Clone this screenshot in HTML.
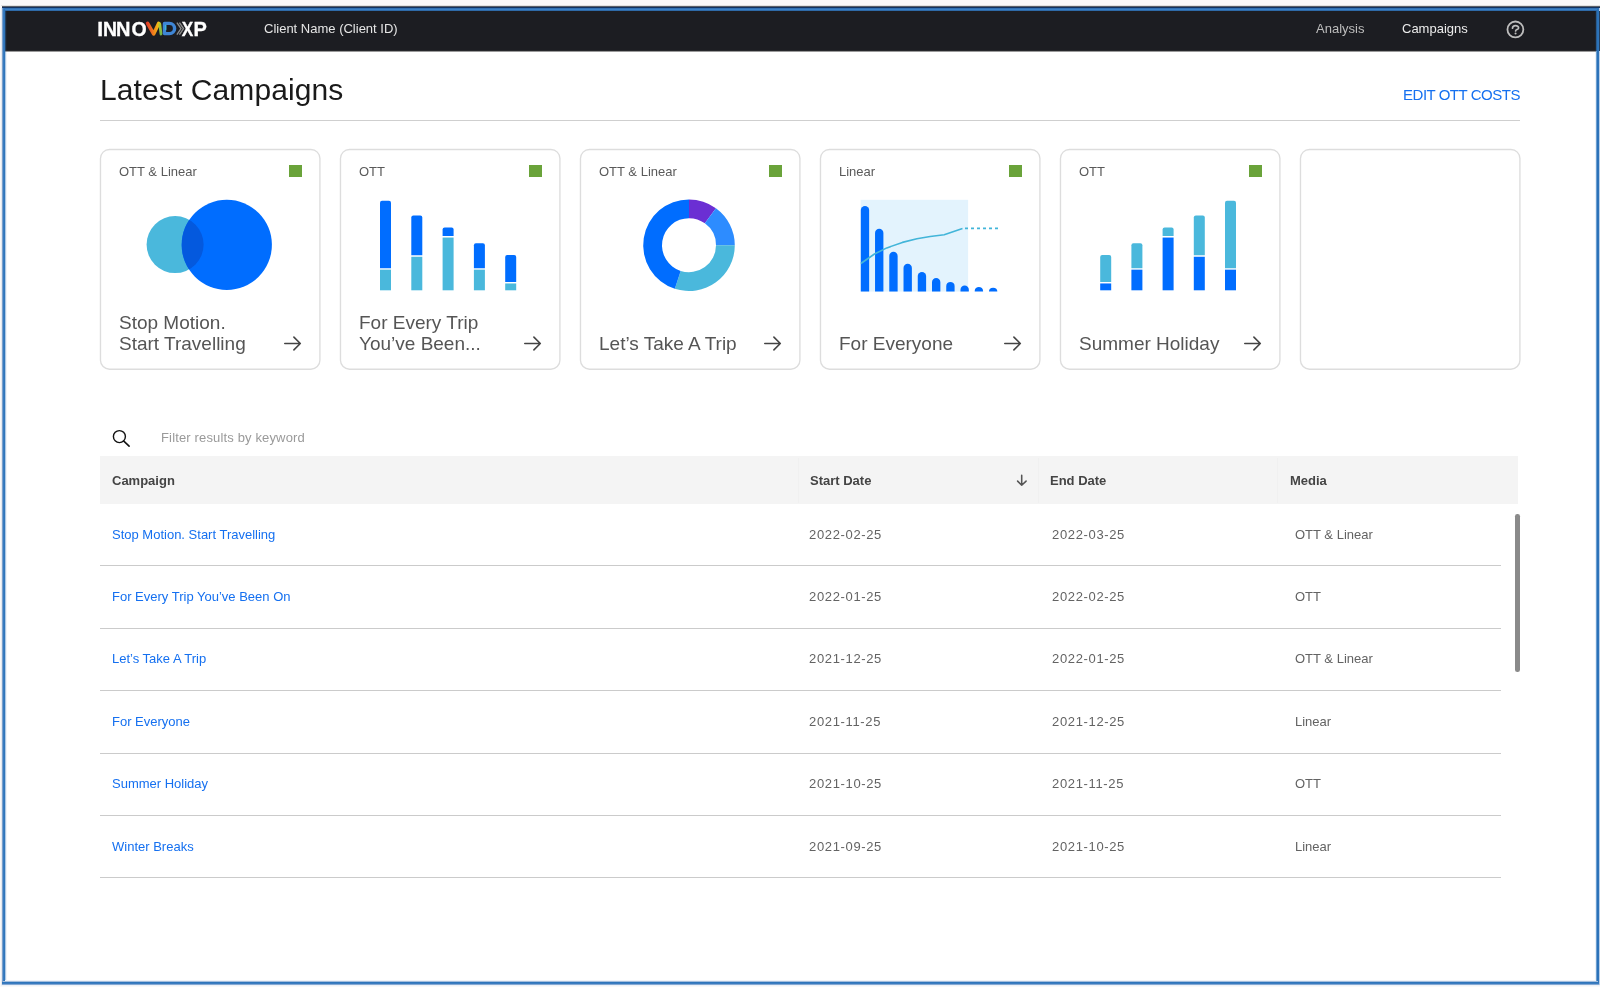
<!DOCTYPE html>
<html><head><meta charset="utf-8">
<style>
*{box-sizing:border-box;margin:0;padding:0}
html,body{width:1600px;height:987px;overflow:hidden;background:#f9f9f9;font-family:"Liberation Sans",sans-serif;position:relative}
.a{position:absolute;white-space:nowrap;line-height:1;will-change:transform}
.b{position:absolute}
.card{position:absolute;top:149px;width:221px;height:221px;border:1.5px solid #e0e0e0;border-radius:8px;background:#fff}
.tag{font-size:13px;color:#5a5a5a}
.sq{position:absolute;top:164.5px;width:12.5px;height:12.5px;background:#6aa33a}
.ct{position:absolute;font-size:19px;color:#555;line-height:21px;white-space:nowrap;will-change:transform}
.th{font-size:13px;font-weight:700;color:#444}
.td{font-size:13px;color:#636363}
.dt{letter-spacing:0.65px}
.lk{font-size:13px;color:#1570f0}
.sep{position:absolute;left:100px;width:1401px;height:1px;background:#cbcbcb}
</style></head>
<body>
<div class="b" style="left:5px;top:11px;width:1595px;height:970px;background:#fff"></div>
<div class="b" style="left:5px;top:11px;width:1595px;height:40px;background:#1c1d22"></div>
<div class="b" style="left:5px;top:50px;width:1591px;height:1px;background:#26272b"></div>
<div class="b" style="left:5px;top:51px;width:1591px;height:1px;background:#9a9a9a"></div>
<div class="b" style="left:1px;top:5px;width:1599px;height:1px;background:#e2e2e2"></div>
<div class="b" style="left:2px;top:6px;width:1598px;height:1px;background:#5a6068"></div>
<div class="b" style="left:2px;top:7px;width:1598px;height:1px;background:#12325f"></div>
<div class="b" style="left:2px;top:8px;width:1598px;height:1px;background:#3070b2"></div>
<div class="b" style="left:2px;top:9px;width:1598px;height:1px;background:#3a80c5"></div>
<div class="b" style="left:2px;top:10px;width:1598px;height:1px;background:#2e6aa8"></div>
<div class="b" style="left:1px;top:8px;width:1px;height:978px;background:#e6e9ef"></div>
<div class="b" style="left:2px;top:8px;width:1px;height:978px;background:#7aa0cc"></div>
<div class="b" style="left:3px;top:8px;width:1px;height:977px;background:#3a7cc0"></div>
<div class="b" style="left:4px;top:8px;width:1px;height:977px;background:#2f75bb"></div>
<div class="b" style="left:5px;top:11px;width:1px;height:974px;background:rgba(48,118,189,0.4)"></div>
<div class="b" style="left:6px;top:11px;width:1px;height:974px;background:rgba(48,118,189,0.08)"></div>
<div class="b" style="left:1595px;top:11px;width:1px;height:974px;background:rgba(48,118,189,0.1)"></div>
<div class="b" style="left:1596px;top:11px;width:1px;height:974px;background:rgba(48,118,189,0.71)"></div>
<div class="b" style="left:1597px;top:8px;width:1px;height:977px;background:#2a72b9"></div>
<div class="b" style="left:1598px;top:8px;width:1px;height:977px;background:#2e74ba"></div>
<div class="b" style="left:1599px;top:8px;width:1px;height:978px;background:#b7cde6"></div>
<div class="b" style="left:1599px;top:11px;width:1px;height:40px;background:#24405f"></div>
<div class="b" style="left:5px;top:980px;width:1591px;height:1px;background:#f0f3f8"></div>
<div class="b" style="left:3px;top:981px;width:1595px;height:1px;background:#a4bedd"></div>
<div class="b" style="left:2px;top:982px;width:1597px;height:1px;background:#2f75bb"></div>
<div class="b" style="left:2px;top:983px;width:1597px;height:1px;background:#3a7cc0"></div>
<div class="b" style="left:2px;top:984px;width:1597px;height:1px;background:#85a9d3"></div>
<div class="b" style="left:1px;top:985px;width:1599px;height:1px;background:#eef2f8"></div>

<svg class="b" style="left:0;top:0;will-change:transform" width="260" height="50"><defs><linearGradient id="gv" x1="146" y1="0" x2="160" y2="0" gradientUnits="userSpaceOnUse"><stop offset="0" stop-color="#e0352a"/><stop offset="0.5" stop-color="#f07a1e"/><stop offset="1" stop-color="#f6d210"/></linearGradient><linearGradient id="gi" x1="0" y1="23" x2="0" y2="35" gradientUnits="userSpaceOnUse"><stop offset="0" stop-color="#b5c932"/><stop offset="1" stop-color="#72b54a"/></linearGradient></defs>
<g font-family="Liberation Sans" font-weight="700" font-size="20" fill="#fff" stroke="#fff" stroke-width="0.35">
<text transform="translate(97.2 35.5) scale(1.05 1)">I</text>
<text transform="translate(102.9 35.5) scale(0.97 1)">N</text>
<text transform="translate(115.9 35.5) scale(1.0 1)">N</text>
<text transform="translate(131.4 35.5) scale(0.975 1)">O</text>
<text transform="translate(181.8 35.5) scale(0.86 1)">X</text>
<text x="193.4" y="35.5">P</text>
</g>
<path d="M147.6 23.4L153.6 33.9L158.6 23.4" fill="none" stroke="url(#gv)" stroke-width="3.6" stroke-linecap="round" stroke-linejoin="round"/>
<path d="M159.8 24L161 34" fill="none" stroke="url(#gi)" stroke-width="2.8" stroke-linecap="round"/>
<path d="M164.45 23.4H169.5A5.1 5.1 0 0 1 169.5 33.6H164.45Z" fill="none" stroke="#3f86d6" stroke-width="3.4" stroke-linejoin="round"/>
<path d="M165.6 25.5V29.5" stroke="#3cb8dc" stroke-width="1.6" stroke-linecap="round"/>
<path d="M176.9 22.6L181 28.6L176.9 34.6M179.4 22.6L183.5 28.6L179.4 34.6" fill="none" stroke="#8c8c8c" stroke-width="1.4"/>
</svg>
<div class="a" style="left:264px;top:22px;font-size:13px;color:#e6e6e6">Client Name (Client ID)</div>
<div class="a" style="left:1316px;top:22px;font-size:13px;color:#bdbdbd">Analysis</div>
<div class="a" style="left:1402px;top:22px;font-size:13px;color:#ececec">Campaigns</div>
<svg class="b" style="left:1500px;top:15px" width="32" height="30"><circle cx="15.4" cy="14.45" r="7.95" fill="none" stroke="#bdbdbd" stroke-width="1.8"/><path d="M12.5 13.2C12.5 9.9 18.6 9.9 18.6 12.9C18.6 14.6 15.6 14.5 15.6 15.9" fill="none" stroke="#bdbdbd" stroke-width="1.7" stroke-linecap="round"/><circle cx="15.55" cy="18.5" r="1.05" fill="#bdbdbd"/></svg>
<div class="a" style="left:99.8px;top:75px;font-size:30px;letter-spacing:0.1px;color:#1a1a1a">Latest Campaigns</div>
<div class="b" style="left:100px;top:119.5px;width:1420px;height:1px;background:#cfcfcf"></div>
<div class="a" style="left:1403px;top:86.5px;font-size:15px;letter-spacing:-0.48px;color:#1570f0">EDIT OTT COSTS</div>
<svg class="b" style="left:95px;top:144px" width="232" height="232"><rect x="5.47" y="5.47" width="219.45" height="219.75" rx="9" fill="#fff" stroke="#dddddd" stroke-width="1.35"/></svg>
<div class="a tag" style="left:119px;top:165px">OTT &amp; Linear</div>
<div class="sq" style="left:289px"></div>
<div class="ct" style="left:119px;top:312px">Stop Motion.</div>
<div class="ct" style="left:119px;top:333px">Start Travelling</div>
<svg class="b" style="left:280px;top:333px" width="24" height="22"><path d="M4.8 10.5H20.3M13.9 4.1L20.3 10.5L13.9 16.9" fill="none" stroke="#444" stroke-width="1.6" stroke-linecap="round" stroke-linejoin="round"/></svg>
<svg class="b" style="left:335px;top:144px" width="232" height="232"><rect x="5.47" y="5.47" width="219.45" height="219.75" rx="9" fill="#fff" stroke="#dddddd" stroke-width="1.35"/></svg>
<div class="a tag" style="left:359px;top:165px">OTT</div>
<div class="sq" style="left:529px"></div>
<div class="ct" style="left:359px;top:312px">For Every Trip</div>
<div class="ct" style="left:359px;top:333px">You&#8217;ve Been...</div>
<svg class="b" style="left:520px;top:333px" width="24" height="22"><path d="M4.8 10.5H20.3M13.9 4.1L20.3 10.5L13.9 16.9" fill="none" stroke="#444" stroke-width="1.6" stroke-linecap="round" stroke-linejoin="round"/></svg>
<svg class="b" style="left:575px;top:144px" width="232" height="232"><rect x="5.47" y="5.47" width="219.45" height="219.75" rx="9" fill="#fff" stroke="#dddddd" stroke-width="1.35"/></svg>
<div class="a tag" style="left:599px;top:165px">OTT &amp; Linear</div>
<div class="sq" style="left:769px"></div>
<div class="ct" style="left:599px;top:333px">Let&#8217;s Take A Trip</div>
<svg class="b" style="left:760px;top:333px" width="24" height="22"><path d="M4.8 10.5H20.3M13.9 4.1L20.3 10.5L13.9 16.9" fill="none" stroke="#444" stroke-width="1.6" stroke-linecap="round" stroke-linejoin="round"/></svg>
<svg class="b" style="left:815px;top:144px" width="232" height="232"><rect x="5.47" y="5.47" width="219.45" height="219.75" rx="9" fill="#fff" stroke="#dddddd" stroke-width="1.35"/></svg>
<div class="a tag" style="left:839px;top:165px">Linear</div>
<div class="sq" style="left:1009px"></div>
<div class="ct" style="left:839px;top:333px">For Everyone</div>
<svg class="b" style="left:1000px;top:333px" width="24" height="22"><path d="M4.8 10.5H20.3M13.9 4.1L20.3 10.5L13.9 16.9" fill="none" stroke="#444" stroke-width="1.6" stroke-linecap="round" stroke-linejoin="round"/></svg>
<svg class="b" style="left:1055px;top:144px" width="232" height="232"><rect x="5.47" y="5.47" width="219.45" height="219.75" rx="9" fill="#fff" stroke="#dddddd" stroke-width="1.35"/></svg>
<div class="a tag" style="left:1079px;top:165px">OTT</div>
<div class="sq" style="left:1249px"></div>
<div class="ct" style="left:1079px;top:333px">Summer Holiday</div>
<svg class="b" style="left:1240px;top:333px" width="24" height="22"><path d="M4.8 10.5H20.3M13.9 4.1L20.3 10.5L13.9 16.9" fill="none" stroke="#444" stroke-width="1.6" stroke-linecap="round" stroke-linejoin="round"/></svg>
<svg class="b" style="left:1295px;top:144px" width="232" height="232"><rect x="5.47" y="5.47" width="219.45" height="219.75" rx="9" fill="#fff" stroke="#dddddd" stroke-width="1.35"/></svg>
<svg class="b" style="left:0;top:0" width="1600" height="400"><defs><clipPath id="cbig"><circle cx="226.8" cy="244.8" r="45.1"/></clipPath></defs><circle cx="175.1" cy="244.6" r="28.5" fill="#4ab8dc"/><circle cx="226.8" cy="244.8" r="45.1" fill="#006dff"/><circle cx="175.1" cy="244.6" r="28.5" fill="#0459de" clip-path="url(#cbig)"/><path d="M380.0 268.15V202.8Q380.0 200.8 382.0 200.8H389.0Q391.0 200.8 391.0 202.8V268.15Z" fill="#006dff"/><rect x="380.0" y="269.65" width="11" height="20.650000000000034" fill="#4ab8dc"/><path d="M411.3 255.25V217.4Q411.3 215.4 413.3 215.4H420.3Q422.3 215.4 422.3 217.4V255.25Z" fill="#006dff"/><rect x="411.3" y="256.75" width="11" height="33.55000000000001" fill="#4ab8dc"/><path d="M442.6 236.05V229.5Q442.6 227.5 444.6 227.5H451.6Q453.6 227.5 453.6 229.5V236.05Z" fill="#006dff"/><rect x="442.6" y="237.55" width="11" height="52.75" fill="#4ab8dc"/><path d="M473.9 268.15V245.3Q473.9 243.3 475.9 243.3H482.9Q484.9 243.3 484.9 245.3V268.15Z" fill="#006dff"/><rect x="473.9" y="269.65" width="11" height="20.650000000000034" fill="#4ab8dc"/><path d="M505.2 281.95V257Q505.2 255 507.2 255H514.2Q516.2 255 516.2 257V281.95Z" fill="#006dff"/><rect x="505.2" y="283.45" width="11" height="6.850000000000023" fill="#4ab8dc"/><path d="M1100.2 281.95V257Q1100.2 255 1102.2 255H1109.2Q1111.2 255 1111.2 257V281.95Z" fill="#4ab8dc"/><rect x="1100.2" y="283.45" width="11" height="6.850000000000023" fill="#006dff"/><path d="M1131.4 268.15V245.3Q1131.4 243.3 1133.4 243.3H1140.4Q1142.4 243.3 1142.4 245.3V268.15Z" fill="#4ab8dc"/><rect x="1131.4" y="269.65" width="11" height="20.650000000000034" fill="#006dff"/><path d="M1162.6000000000001 236.05V229.5Q1162.6000000000001 227.5 1164.6000000000001 227.5H1171.6000000000001Q1173.6000000000001 227.5 1173.6000000000001 229.5V236.05Z" fill="#4ab8dc"/><rect x="1162.6000000000001" y="237.55" width="11" height="52.75" fill="#006dff"/><path d="M1193.8 255.25V217.4Q1193.8 215.4 1195.8 215.4H1202.8Q1204.8 215.4 1204.8 217.4V255.25Z" fill="#4ab8dc"/><rect x="1193.8" y="256.75" width="11" height="33.55000000000001" fill="#006dff"/><path d="M1225.0 268.15V202.8Q1225.0 200.8 1227.0 200.8H1234.0Q1236.0 200.8 1236.0 202.8V268.15Z" fill="#4ab8dc"/><rect x="1225.0" y="269.65" width="11" height="20.650000000000034" fill="#006dff"/><path d="M689.00 199.40A45.8 45.8 0 0 1 715.92 208.15L704.87 223.36A27 27 0 0 0 689.00 218.20Z" fill="#6b2fd3"/><path d="M715.92 208.15A45.8 45.8 0 0 1 734.80 245.20L716.00 245.20A27 27 0 0 0 704.87 223.36Z" fill="#2d8cff"/><path d="M734.80 245.20A45.8 45.8 0 0 1 674.85 288.76L680.66 270.88A27 27 0 0 0 716.00 245.20Z" fill="#4ab8dc"/><path d="M674.85 288.76A45.8 45.8 0 0 1 689.00 199.40L689.00 218.20A27 27 0 0 0 680.66 270.88Z" fill="#006dff"/><rect x="860.6" y="199.8" width="107.5" height="91.8" fill="#e3f3fd"/><path d="M860.8 291.6V210.08A4.18 4.18 0 0 1 869.16 210.08V291.6Z" fill="#006dff"/><path d="M875.04 291.6V232.88A4.18 4.18 0 0 1 883.4 232.88V291.6Z" fill="#006dff"/><path d="M889.28 291.6V255.98000000000002A4.18 4.18 0 0 1 897.64 255.98000000000002V291.6Z" fill="#006dff"/><path d="M903.52 291.6V267.98A4.18 4.18 0 0 1 911.88 267.98V291.6Z" fill="#006dff"/><path d="M917.76 291.6V276.08A4.18 4.18 0 0 1 926.12 276.08V291.6Z" fill="#006dff"/><path d="M932.0 291.6V282.18A4.18 4.18 0 0 1 940.36 282.18V291.6Z" fill="#006dff"/><path d="M946.24 291.6V286.08A4.18 4.18 0 0 1 954.6 286.08V291.6Z" fill="#006dff"/><path d="M960.48 291.6V289.78000000000003A4.18 4.18 0 0 1 968.84 289.78000000000003V291.6Z" fill="#006dff"/><path d="M974.7199999999999 291.6V291.08A4.18 4.18 0 0 1 983.0799999999999 291.08V291.6Z" fill="#006dff"/><path d="M988.9599999999999 291.6A4.18 3.900000000000034 0 0 1 997.3199999999999 291.6Z" fill="#006dff"/><path d="M860.8 263.5L874.5 254L886.8 247.9L902.4 242.4L916.9 238.7L930.2 236.5L944.2 234.8L962.5 228.4" fill="none" stroke="#42b5d9" stroke-width="1.6" stroke-linejoin="round"/><path d="M965 228.4H998" fill="none" stroke="#42b5d9" stroke-width="1.8" stroke-dasharray="3 3"/></svg>
<svg class="b" style="left:105px;top:425px" width="30" height="28"><circle cx="14.4" cy="11.6" r="6" fill="none" stroke="#111" stroke-width="1.4"/><path d="M18.8 16.2L24.1 21.2" stroke="#111" stroke-width="1.6" stroke-linecap="round"/></svg>
<div class="a" style="left:161px;top:431px;font-size:13px;letter-spacing:0.15px;color:#9a9a9a">Filter results by keyword</div>
<div class="b" style="left:100px;top:456px;width:1418px;height:48px;background:#f4f4f4"></div>
<div class="b" style="left:798px;top:458px;width:1px;height:45px;background:#f0f0f0"></div>
<div class="b" style="left:1038px;top:458px;width:1px;height:45px;background:#f0f0f0"></div>
<div class="b" style="left:1277px;top:458px;width:1px;height:45px;background:#f0f0f0"></div>
<div class="a th" style="left:112px;top:473.5px">Campaign</div>
<div class="a th" style="left:810px;top:473.5px">Start Date</div>
<div class="a th" style="left:1050px;top:473.5px">End Date</div>
<div class="a th" style="left:1290px;top:473.5px">Media</div>
<svg class="b" style="left:1012px;top:470px" width="20" height="20"><path d="M9.7 5.3V15.2M5.6 11.1L9.7 15.3L14.1 11.1" fill="none" stroke="#555" stroke-width="1.55" stroke-linecap="round" stroke-linejoin="round"/></svg>
<div class="a lk" style="left:112px;top:527.5px">Stop Motion. Start Travelling</div>
<div class="a td dt" style="left:809px;top:527.5px">2022-02-25</div>
<div class="a td dt" style="left:1052px;top:527.5px">2022-03-25</div>
<div class="a td" style="left:1295px;top:527.5px">OTT &amp; Linear</div>
<div class="sep" style="top:565px"></div>
<div class="a lk" style="left:112px;top:589.9px">For Every Trip You&#8217;ve Been On</div>
<div class="a td dt" style="left:809px;top:589.9px">2022-01-25</div>
<div class="a td dt" style="left:1052px;top:589.9px">2022-02-25</div>
<div class="a td" style="left:1295px;top:589.9px">OTT</div>
<div class="sep" style="top:628px"></div>
<div class="a lk" style="left:112px;top:652.3px">Let&#8217;s Take A Trip</div>
<div class="a td dt" style="left:809px;top:652.3px">2021-12-25</div>
<div class="a td dt" style="left:1052px;top:652.3px">2022-01-25</div>
<div class="a td" style="left:1295px;top:652.3px">OTT &amp; Linear</div>
<div class="sep" style="top:690px"></div>
<div class="a lk" style="left:112px;top:714.7px">For Everyone</div>
<div class="a td dt" style="left:809px;top:714.7px">2021-11-25</div>
<div class="a td dt" style="left:1052px;top:714.7px">2021-12-25</div>
<div class="a td" style="left:1295px;top:714.7px">Linear</div>
<div class="sep" style="top:753px"></div>
<div class="a lk" style="left:112px;top:777.1px">Summer Holiday</div>
<div class="a td dt" style="left:809px;top:777.1px">2021-10-25</div>
<div class="a td dt" style="left:1052px;top:777.1px">2021-11-25</div>
<div class="a td" style="left:1295px;top:777.1px">OTT</div>
<div class="sep" style="top:815px"></div>
<div class="a lk" style="left:112px;top:839.5px">Winter Breaks</div>
<div class="a td dt" style="left:809px;top:839.5px">2021-09-25</div>
<div class="a td dt" style="left:1052px;top:839.5px">2021-10-25</div>
<div class="a td" style="left:1295px;top:839.5px">Linear</div>
<div class="sep" style="top:877px"></div>
<div class="b" style="left:1515.4px;top:514px;width:4.6px;height:158px;border-radius:2.3px;background:#8a8a8a"></div>
</body></html>
